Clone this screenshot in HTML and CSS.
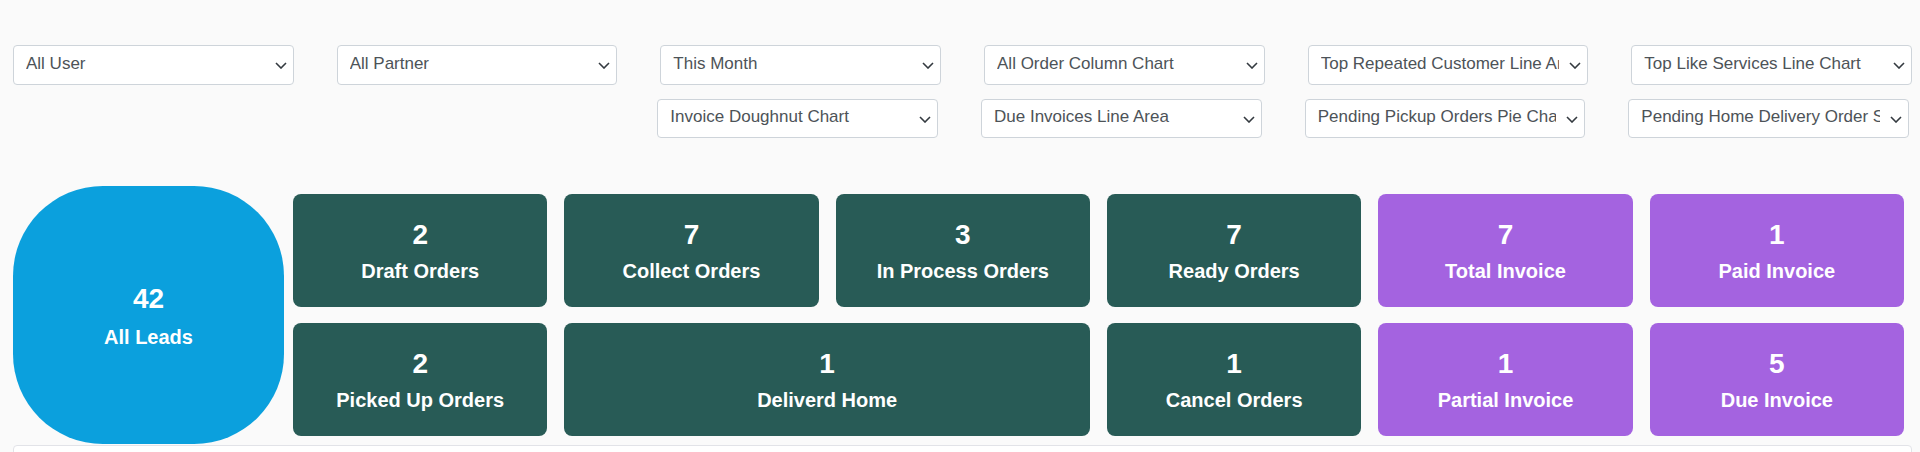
FILE: index.html
```html
<!DOCTYPE html>
<html lang="en">
<head>
<meta charset="UTF-8">
<meta name="viewport" content="width=device-width, initial-scale=1.0">
<title>Dashboard</title>
<link rel="stylesheet" href="styles.css">
</head>
<body>

<div class="dashboard">

    <!-- Filters and chart pickers -->
    <div class="filters">
        <div class="filter-col">
            <div class="select-wrap">
                <select class="filter-select"><option>All User</option></select>
                <svg class="chevron" viewBox="0 0 12 7"><path d="M1 1 L6 6 L11 1"/></svg>
            </div>
        </div>
        <div class="filter-col">
            <div class="select-wrap">
                <select class="filter-select"><option>All Partner</option></select>
                <svg class="chevron" viewBox="0 0 12 7"><path d="M1 1 L6 6 L11 1"/></svg>
            </div>
        </div>
        <div class="filter-col">
            <div class="select-wrap">
                <select class="filter-select"><option>This Month</option></select>
                <svg class="chevron" viewBox="0 0 12 7"><path d="M1 1 L6 6 L11 1"/></svg>
            </div>
            <div class="select-wrap sub">
                <select class="filter-select"><option>Invoice Doughnut Chart</option></select>
                <svg class="chevron" viewBox="0 0 12 7"><path d="M1 1 L6 6 L11 1"/></svg>
            </div>
        </div>
        <div class="filter-col">
            <div class="select-wrap">
                <select class="filter-select"><option>All Order Column Chart</option></select>
                <svg class="chevron" viewBox="0 0 12 7"><path d="M1 1 L6 6 L11 1"/></svg>
            </div>
            <div class="select-wrap sub">
                <select class="filter-select"><option>Due Invoices Line Area</option></select>
                <svg class="chevron" viewBox="0 0 12 7"><path d="M1 1 L6 6 L11 1"/></svg>
            </div>
        </div>
        <div class="filter-col">
            <div class="select-wrap">
                <select class="filter-select"><option>Top Repeated Customer Line Area Chart</option></select>
                <svg class="chevron" viewBox="0 0 12 7"><path d="M1 1 L6 6 L11 1"/></svg>
            </div>
            <div class="select-wrap sub">
                <select class="filter-select"><option>Pending Pickup Orders Pie Chart</option></select>
                <svg class="chevron" viewBox="0 0 12 7"><path d="M1 1 L6 6 L11 1"/></svg>
            </div>
        </div>
        <div class="filter-col">
            <div class="select-wrap">
                <select class="filter-select"><option>Top Like Services Line Chart</option></select>
                <svg class="chevron" viewBox="0 0 12 7"><path d="M1 1 L6 6 L11 1"/></svg>
            </div>
            <div class="select-wrap sub">
                <select class="filter-select"><option>Pending Home Delivery Order Semi Pie Chart</option></select>
                <svg class="chevron" viewBox="0 0 12 7"><path d="M1 1 L6 6 L11 1"/></svg>
            </div>
        </div>
    </div>

    <!-- Counters -->
    <div class="stats">
        <div class="lead-card">
            <div class="stat-count">42</div>
            <div class="stat-label">All Leads</div>
        </div>

        <div class="stat-grid">
            <div class="stat-box order">
                <div class="stat-count">2</div>
                <div class="stat-label">Draft Orders</div>
            </div>
            <div class="stat-box order">
                <div class="stat-count">7</div>
                <div class="stat-label">Collect Orders</div>
            </div>
            <div class="stat-box order">
                <div class="stat-count">3</div>
                <div class="stat-label">In Process Orders</div>
            </div>
            <div class="stat-box order">
                <div class="stat-count">7</div>
                <div class="stat-label">Ready Orders</div>
            </div>
            <div class="stat-box invoice">
                <div class="stat-count">7</div>
                <div class="stat-label">Total Invoice</div>
            </div>
            <div class="stat-box invoice">
                <div class="stat-count">1</div>
                <div class="stat-label">Paid Invoice</div>
            </div>

            <div class="stat-box order">
                <div class="stat-count">2</div>
                <div class="stat-label">Picked Up Orders</div>
            </div>
            <div class="stat-box order wide">
                <div class="stat-count">1</div>
                <div class="stat-label">Deliverd Home</div>
            </div>
            <div class="stat-box order">
                <div class="stat-count">1</div>
                <div class="stat-label">Cancel Orders</div>
            </div>
            <div class="stat-box invoice">
                <div class="stat-count">1</div>
                <div class="stat-label">Partial Invoice</div>
            </div>
            <div class="stat-box invoice">
                <div class="stat-count">5</div>
                <div class="stat-label">Due Invoice</div>
            </div>
        </div>
    </div>

    <!-- Chart area -->
    <div class="chart-card"></div>
</div>

</body>
</html>
```

FILE: styles.css
```css
html, body {
    overflow: hidden;
}

body {
    margin: 0;
    padding: 0;
    font-family: 'Liberation Sans', Arial, sans-serif;
    background-color: #fafafa;
    color: #333;
}

.dashboard {
    padding: 0 8px 0 13px;
}

/* Filter selects */
.filters {
    display: flex;
    align-items: flex-start;
    gap: 43px;
    padding-top: 45px;
}

.filter-col {
    flex: 1;
    display: flex;
    flex-direction: column;
    gap: 14px;
}

.select-wrap {
    position: relative;
    height: 40px;
}

.select-wrap.sub {
    height: 39px;
    margin-left: -3px;
    margin-right: 3px;
}

.filter-select {
    -webkit-appearance: none;
    appearance: none;
    width: 100%;
    height: 100%;
    padding: 0 28px 4px 12px;
    font-family: 'Liberation Sans', Arial, sans-serif;
    font-size: 17px;
    color: #4d5358;
    background-color: #fff;
    border: 1px solid #ced4da;
    border-radius: 4px;
}

.chevron {
    position: absolute;
    right: 7px;
    top: 50%;
    width: 12px;
    height: 7px;
    margin-top: -3px;
    fill: none;
    stroke: #343a40;
    stroke-width: 1.6;
    pointer-events: none;
}

/* Counter tiles */
.stats {
    display: flex;
    align-items: center;
    margin-top: 48px;
    padding-right: 8px;
}

.lead-card {
    width: 271px;
    height: 258px;
    flex-shrink: 0;
    display: flex;
    flex-direction: column;
    align-items: center;
    justify-content: center;
    background-color: #0ba0dd;
    border-radius: 90px;
    color: #fff;
}

.lead-card .stat-label {
    margin-top: 9px;
}

.stat-grid {
    flex: 1;
    display: grid;
    grid-template-columns: repeat(6, 1fr);
    grid-auto-rows: 113px;
    gap: 16px 17px;
    margin-left: 9px;
}

.stat-box {
    display: flex;
    flex-direction: column;
    align-items: center;
    justify-content: center;
    border-radius: 8px;
    color: #fff;
}

.stat-box.order {
    background-color: #285b56;
}

.stat-box.invoice {
    background-color: #a463e0;
}

.stat-box.wide {
    grid-column: span 2;
}

.stat-count {
    font-size: 28px;
    font-weight: bold;
    line-height: 34px;
}

.stat-label {
    margin-top: 7px;
    font-size: 20px;
    font-weight: bold;
    line-height: 24px;
}

.chart-card {
    height: 200px;
    margin-top: 1px;
    background-color: #fff;
    border: 1px solid #e2e3e8;
    border-radius: 4px;
}
```
